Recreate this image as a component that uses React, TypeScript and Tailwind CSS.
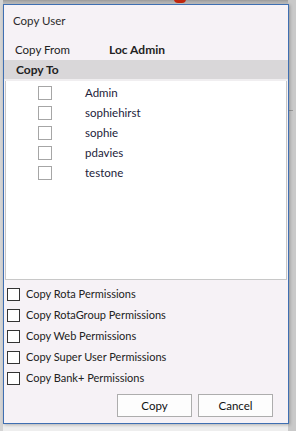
import React from "react";

const users = ["Admin", "sophiehirst", "sophie", "pdavies", "testone"];
const perms = [
  "Copy Rota Permissions",
  "Copy RotaGroup Permissions",
  "Copy Web Permissions",
  "Copy Super User Permissions",
  "Copy Bank+ Permissions",
];

export default function App() {
  return (
    <div
      className="w-[296px] h-[431px] bg-[#eeeeee] relative overflow-hidden"
      style={{ fontFamily: 'Lato, "Noto Sans", sans-serif' }}
    >
      {/* background app bits */}
      <div className="absolute left-0 top-0 w-[296px] h-[4px] bg-gradient-to-b from-[#9a9a9a] to-[#c4c4c4]" />
      <div className="absolute left-[174px] top-[-5px] w-[12px] h-[8px] rounded-full bg-[#c0260e]" />
      <div className="absolute right-0 top-0 w-[8px] h-[431px] bg-[#c9c9c9]" />
      <div className="absolute right-[3px] top-[110px] w-[5px] h-[1px] bg-[#9a9a9a]" />
      <div className="absolute left-0 top-0 w-[3px] h-[431px] bg-[#d4d4d4]" />

      <div className="absolute left-[3px] top-[4px] w-[286px] h-[420px] border border-[#3f6fb2] bg-[#f6f2f6] flex flex-col text-[11px] shadow-[1px_1px_3px_rgba(0,0,0,0.25)]">
        <div className="h-[31px] flex items-center pl-[9px] text-[#2b2b2b] text-[11.5px]">Copy User</div>
        <div className="h-[24px] pt-[4px] flex items-center pl-[11px] text-[#222] text-[11.5px]">
          <span className="w-[94px]">Copy From</span>
          <span className="font-bold text-[12px]">Loc Admin</span>
        </div>
        <div className="h-[21px] bg-[#d9d7d9] flex items-center pl-[12px] font-bold text-[#222] text-[12px] border-b-2 border-[#f0eef0]">
          Copy To
        </div>
        <div className="mx-[1px] h-[199px] bg-white border-l border-r border-b border-[#c8c8c8] pt-[2px]">
          {users.map((u) => (
            <div key={u} className="h-[20px] flex items-center">
              <div className="ml-[32px] w-[14px] h-[14px] border border-[#a6a6a6] bg-white" />
              <span className="ml-[33px] text-[#22223a] text-[11.5px]">{u}</span>
            </div>
          ))}
        </div>
        <div className="pt-[4px] flex flex-col">
          {perms.map((p) => (
            <div key={p} className="h-[21px] flex items-center">
              <div className="ml-[3px] w-[13px] h-[13px] border border-[#333] bg-white" />
              <span className="ml-[6px] text-[#222]">{p}</span>
            </div>
          ))}
        </div>
        <div className="flex justify-end gap-[6px] pr-[15px] mt-[5px]">
          <button className="w-[75px] h-[23px] border border-[#adadad] bg-[#fdfdfd] text-[#111] text-[11.5px]">Copy</button>
          <button className="w-[75px] h-[23px] border border-[#adadad] bg-[#fdfdfd] text-[#111] text-[11.5px]">Cancel</button>
        </div>
      </div>
    </div>
  );
}
